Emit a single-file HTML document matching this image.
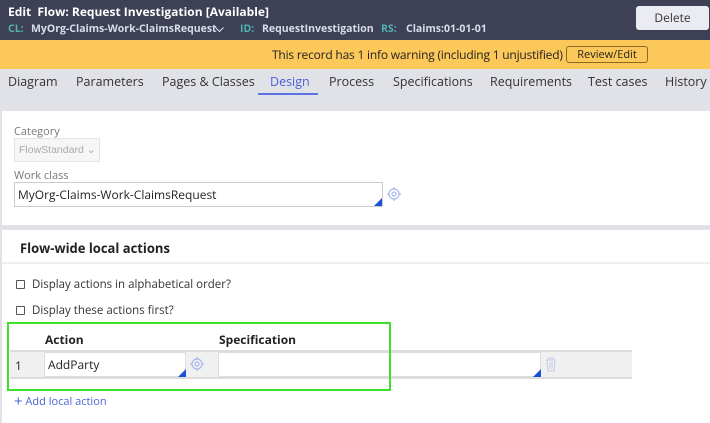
<!DOCTYPE html>
<html><head><style>
*{box-sizing:border-box;margin:0;padding:0}
body{width:710px;height:423px;overflow:hidden;background:#e1e2e7;font-family:"Open Sans","Liberation Sans",sans-serif;position:relative;color:#222}
.a{position:absolute;white-space:nowrap}
</style></head><body>
<div class="a" style="left:0;top:0;width:710px;height:40px;background:#3e4055"></div>
<div class="a" style="left:8px;top:3px;color:#fff;font-size:12px;font-weight:bold">Edit&nbsp; Flow: Request Investigation [Available]</div>
<div class="a" style="top:22px;left:0;font-size:10.5px;font-weight:bold;color:#d8dcec">
<span class="a" style="left:8px;color:#4fb3b0">CL:</span><span class="a" style="left:31px">MyOrg-Claims-Work-ClaimsRequest</span>
<span class="a" style="left:240px;color:#4fb3b0">ID:</span><span class="a" style="left:262px">RequestInvestigation</span>
<span class="a" style="left:381px;color:#4fb3b0">RS:</span><span class="a" style="left:406px">Claims:01-01-01</span></div>
<svg class="a" style="left:215px;top:27px" width="9" height="6" viewBox="0 0 9 6" fill="none" stroke="#d8dcec" stroke-width="1.1"><path d="M0.5 0.5l4 4 4-4"/></svg>
<div class="a" style="left:636px;top:6px;width:73px;height:24px;background:#ebecf1;border-radius:3px;font-size:12px;text-align:center;line-height:24px;color:#333">Delete</div>
<div class="a" style="left:0;top:40px;width:710px;height:29px;background:#fdc85a"></div>
<div class="a" style="left:272px;top:46px;font-size:12px;color:#222;letter-spacing:-0.2px">This record has 1 info warning (including 1 unjustified)</div>
<div class="a" style="left:566px;top:46px;width:82px;height:17px;border:1px solid #8a6a20;border-radius:3px;font-size:11px;text-align:center;line-height:15px">Review/Edit</div>
<div class="a" style="top:73px;left:0;font-size:12.5px;color:#333;width:710px">
<span class="a" style="left:8px">Diagram</span><span class="a" style="left:76px">Parameters</span><span class="a" style="left:162px">Pages &amp; Classes</span><span class="a" style="left:270px;color:#4a5fd4">Design</span><span class="a" style="left:329px">Process</span><span class="a" style="left:393px">Specifications</span><span class="a" style="left:490px">Requirements</span><span class="a" style="left:588px">Test cases</span><span class="a" style="left:665px">History</span></div>
<div class="a" style="left:258px;top:93px;width:60px;height:2px;background:#5a74e8"></div>
<div class="a" style="left:2px;top:111px;width:708px;height:114px;background:#fff"></div>
<div class="a" style="left:14px;top:124px;font-size:11px;color:#777">Category</div>
<div class="a" style="left:14px;top:138px;width:86px;height:24px;border:1px solid #e4e4e4;background:#f6f6f6;font-size:10.5px;color:#aaa;line-height:22px;padding-left:4px;font-family:'Liberation Sans',sans-serif">FlowStandard ⌄</div>
<div class="a" style="left:14px;top:168px;font-size:11px;color:#777">Work class</div>
<div class="a" style="left:14px;top:182px;width:369px;height:25px;border:1px solid #ccc;font-size:12px;line-height:23px;padding-left:3px">MyOrg-Claims-Work-ClaimsRequest</div>
<div class="a" style="left:374px;top:198px;width:0;height:0;border-left:8px solid transparent;border-bottom:8px solid #1a4fd6"></div>
<svg class="a" style="left:387px;top:187px" width="14" height="14" viewBox="0 0 14 14" fill="none" stroke="#a9b8ee" stroke-width="1.2"><circle cx="7" cy="7" r="5"/><circle cx="7" cy="7" r="2"/><path d="M7 0v2M7 12v2M0 7h2M12 7h2"/></svg>
<div class="a" style="left:2px;top:230px;width:708px;height:193px;background:#fff"></div>
<div class="a" style="left:20px;top:239px;font-size:13px;font-weight:bold;color:#222">Flow-wide local actions</div>
<div class="a" style="left:2px;top:262px;width:708px;height:2px;background:#eee"></div>
<div class="a" style="left:16px;top:280px;width:9px;height:9px;border:1px solid #555;border-radius:1px"></div>
<div class="a" style="left:32px;top:277px;font-size:11.5px;color:#333">Display actions in alphabetical order?</div>
<div class="a" style="left:16px;top:306px;width:9px;height:9px;border:1px solid #555;border-radius:1px"></div>
<div class="a" style="left:32px;top:303px;font-size:11.5px;color:#333">Display these actions first?</div>
<div class="a" style="left:45px;top:331px;font-size:12px;font-weight:bold">Action</div>
<div class="a" style="left:219px;top:331px;font-size:12px;font-weight:bold">Specification</div>
<div class="a" style="left:10px;top:350px;width:622px;height:29px;background:#f0f0f0;border-top:2px solid #ddd;border-bottom:2px solid #ddd"></div>
<div class="a" style="left:15px;top:357px;font-size:12px">1</div>
<div class="a" style="left:44px;top:352px;width:142px;height:25px;background:#fff;border:1px solid #ddd;font-size:12px;line-height:23px;padding-left:3px">AddParty</div>
<div class="a" style="left:178px;top:369px;width:0;height:0;border-left:8px solid transparent;border-bottom:8px solid #1a4fd6"></div>
<svg class="a" style="left:190px;top:357px" width="14" height="14" viewBox="0 0 14 14" fill="none" stroke="#a9b8ee" stroke-width="1.2"><circle cx="7" cy="7" r="5"/><circle cx="7" cy="7" r="2"/><path d="M7 0v2M7 12v2M0 7h2M12 7h2"/></svg>
<div class="a" style="left:218px;top:352px;width:323px;height:25px;background:#fff;border:1px solid #ddd"></div>
<div class="a" style="left:533px;top:369px;width:0;height:0;border-left:8px solid transparent;border-bottom:8px solid #1a4fd6"></div>
<svg class="a" style="left:545px;top:357px" width="12" height="15" viewBox="0 0 12 15" fill="none" stroke="#c4cbe8" stroke-width="1"><path d="M1 3h10M4 3V1h4v2M2 3l1 11h6l1-11M5 5v7M7 5v7"/></svg>
<div class="a" style="left:7px;top:322px;width:384px;height:69px;border:2px solid #3ee02a"></div>
<div class="a" style="left:14px;top:391px;font-size:11px;color:#4a64d8"><span style="font-size:15px;vertical-align:-1px">+</span> Add local action</div>
</body></html>
